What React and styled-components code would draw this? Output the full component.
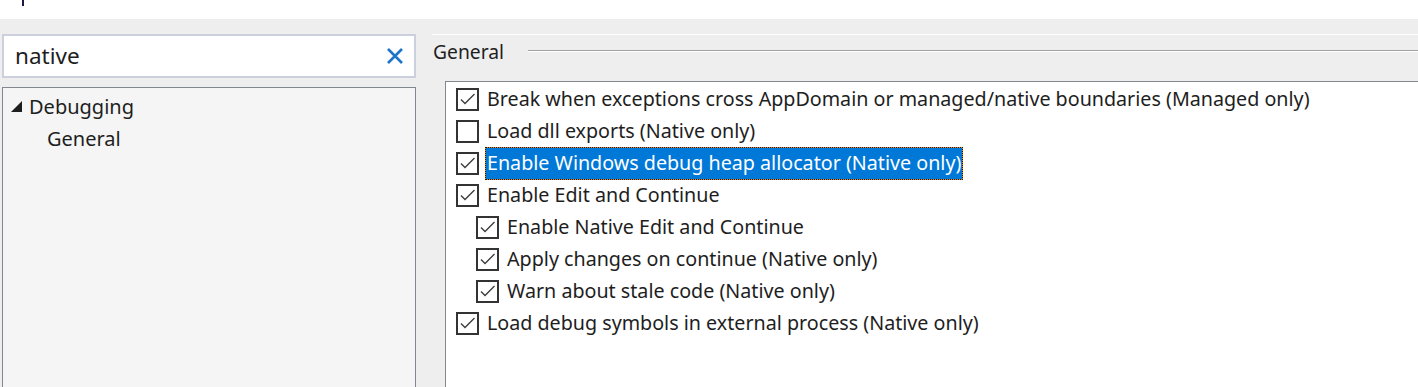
import styled, { createGlobalStyle } from "styled-components";

const GlobalStyle = createGlobalStyle`
  html, body {
    margin: 0;
    padding: 0;
    background: #eeeeee;
    overflow: hidden;
  }
  body {
    font-family: "Noto Sans", "Open Sans", sans-serif;
    color: #1e1e1e;
  }
`;

const Page = styled.div`
  width: 1418px;
  height: 387px;
  display: flex;
  flex-direction: column;
  overflow: hidden;
`;

const TopStrip = styled.div`
  height: 19px;
  background: #ffffff;
  padding-left: 22px;
  flex-shrink: 0;
`;

const Caret = styled.div`
  width: 2px;
  height: 6px;
  background: #1a1a40;
`;

const Main = styled.div`
  flex: 1;
  display: flex;
  min-height: 0;
`;

const LeftColumn = styled.div`
  width: 414px;
  margin-left: 2px;
  padding-top: 15px;
  display: flex;
  flex-direction: column;
  gap: 9px;
`;

const SearchBox = styled.div`
  height: 40px;
  border: 2px solid #ccd0dc;
  background: #ffffff;
  display: flex;
  align-items: center;
  justify-content: space-between;
  padding: 0 10px 0 11px;
`;

const SearchText = styled.span`
  font-size: 22.5px;
  margin-top: -1px;
`;

const ClearButton = styled.svg`
  width: 18px;
  height: 18px;
`;

const TreePanel = styled.div`
  flex: 1;
  border: 1px solid #828790;
  border-bottom: none;
  background: #f5f5f5;
  padding-top: 2px;
`;

const TreeItem = styled.div`
  display: flex;
  align-items: center;
  height: 32px;
  padding-left: ${(p) => p.$indent}px;
  font-size: 20px;
  gap: 7px;
`;

const Expander = styled.svg`
  width: 11px;
  height: 11px;
  margin-top: 1px;
`;

const RightColumn = styled.div`
  flex: 1;
  margin-left: 16px;
  padding-top: 15px;
  display: flex;
  flex-direction: column;
  min-width: 0;
`;

const HeaderRow = styled.div`
  border-top: 1px solid #ffffff;
  height: 31px;
  margin-bottom: 15px;
  display: flex;
  align-items: center;
  gap: 24px;
  padding-left: 1px;
`;

const HeaderLabel = styled.span`
  font-size: 19.3px;
  line-height: 1;
  margin-top: 2px;
`;

const HeaderRule = styled.div`
  flex: 1;
  height: 1px;
  background: #a0a0a0;
  border-bottom: 1px solid #ffffff;
`;

const OptionsPanel = styled.div`
  flex: 1;
  margin-left: 13px;
  border-top: 1px solid #828790;
  border-left: 1px solid #828790;
  background: #ffffff;
  padding: 1px 0 0 10px;
`;

const OptionRow = styled.div`
  display: flex;
  align-items: center;
  height: 32px;
  padding-left: ${(p) => p.$level * 20}px;
`;

const Box = styled.div`
  width: 23px;
  height: 23px;
  box-sizing: border-box;
  border: 2px solid #333333;
  background: #ffffff;
  flex-shrink: 0;
  margin-right: 6px;
`;

const Label = styled.span`
  font-size: 19.7px;
  white-space: nowrap;
  padding: 0 2px;
  height: 33px;
  line-height: 32px;
  box-sizing: border-box;
  ${(p) =>
    p.$selected &&
    `
    background: #0078d7;
    color: #ffffff;
    outline: 1px dotted #1a1a1a;
    outline-offset: -1px;
    box-shadow: inset 0 0 0 1px #e08a1e;
  `}
`;

const CheckIcon = () => (
  <svg width="19" height="19" viewBox="0 0 19 19" style={{ display: "block" }}>
    <path d="M3 9.5 L7 13.5 L16.5 4" fill="none" stroke="#3a3a3a" strokeWidth="1.3" />
  </svg>
);

const options = [
  { label: "Break when exceptions cross AppDomain or managed/native boundaries (Managed only)", checked: true, level: 0 },
  { label: "Load dll exports (Native only)", checked: false, level: 0 },
  { label: "Enable Windows debug heap allocator (Native only)", checked: true, level: 0, selected: true },
  { label: "Enable Edit and Continue", checked: true, level: 0 },
  { label: "Enable Native Edit and Continue", checked: true, level: 1 },
  { label: "Apply changes on continue (Native only)", checked: true, level: 1 },
  { label: "Warn about stale code (Native only)", checked: true, level: 1 },
  { label: "Load debug symbols in external process (Native only)", checked: true, level: 0 },
];

export default function App() {
  return (
    <Page>
      <GlobalStyle />
      <TopStrip>
        <Caret />
      </TopStrip>
      <Main>
        <LeftColumn>
          <SearchBox>
            <SearchText>native</SearchText>
            <ClearButton viewBox="0 0 18 18">
              <path d="M2 2 L16 16 M16 2 L2 16" stroke="#1e74c8" strokeWidth="2.6" fill="none" />
            </ClearButton>
          </SearchBox>
          <TreePanel>
            <TreeItem $indent={8}>
              <Expander viewBox="0 0 11 11">
                <path d="M11 0 L11 11 L0 11 Z" fill="#1e1e1e" />
              </Expander>
              Debugging
            </TreeItem>
            <TreeItem $indent={44}>General</TreeItem>
          </TreePanel>
        </LeftColumn>
        <RightColumn>
          <HeaderRow>
            <HeaderLabel>General</HeaderLabel>
            <HeaderRule />
          </HeaderRow>
          <OptionsPanel>
            {options.map((o) => (
              <OptionRow key={o.label} $level={o.level}>
                <Box>{o.checked && <CheckIcon />}</Box>
                <Label $selected={o.selected}>{o.label}</Label>
              </OptionRow>
            ))}
          </OptionsPanel>
        </RightColumn>
      </Main>
    </Page>
  );
}
